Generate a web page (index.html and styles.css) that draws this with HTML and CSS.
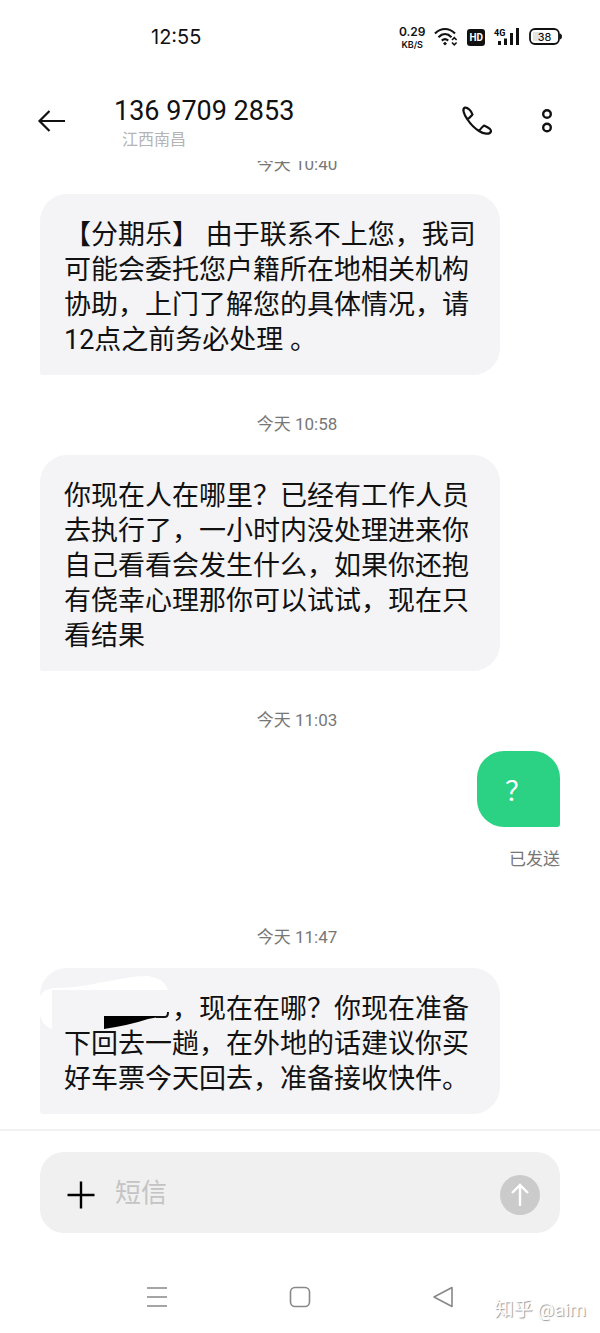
FILE: index.html
```html
<!DOCTYPE html>
<html lang="zh-CN">
<head>
<meta charset="utf-8">
<meta name="viewport" content="width=device-width, initial-scale=1">
<title>短信</title>
<link rel="stylesheet" href="styles.css">
</head>
<body>
<div class="screen">
  <div class="status">
    <span class="clock">12:55</span>
    <div class="indicators">
      <div class="speed"><b>0.29</b><span>KB/S</span></div>
      <svg class="wifi" width="24" height="20" viewBox="0 0 24 20" fill="none" stroke="#111" stroke-width="2.2">
        <path d="M1 6.5C7 .5 15 .5 21 6.5M4.500 10.200C8.500 6.200 13.500 6.200 17.500 10.200M7.800 13.600C9.800 11.800 12.200 11.800 14.200 13.600"/>
        <path d="M9 16.500L11 14.800L13 16.500L11 18.500Z" fill="#111" stroke="none"/>
        <path d="M18 13L20.300 10.700L22.600 13M18 15.500L20.300 17.800L22.600 15.500" stroke-width="1.600"/>
      </svg>
      <span class="hd">HD</span>
      <svg class="signal" width="26" height="20" viewBox="0 0 26 20">
        <text class="net" x="0" y="9">4G</text>
        <path d="M4 14h3v4H4zM10 11.500h3V18h-3zM16 6h3v12h-3zM22 1h3v17h-3z" fill="#111"/>
      </svg>
      <svg class="battery" width="34" height="18" viewBox="0 0 34 18">
        <rect x="1" y="1" width="29" height="15" rx="5" fill="#fff" stroke="#111" stroke-width="1.800"/>
        <path d="M4 4h10v9H4z" fill="#e4e4e4"/>
        <path d="M31 6c2 0 2 5 0 5z" fill="#111" stroke="#111"/>
        <text class="level" x="15.500" y="13" text-anchor="middle">38</text>
      </svg>
    </div>
  </div>

  <header class="header">
    <button class="icon-button" aria-label="返回">
      <svg width="30" height="24" viewBox="0 0 30 24" fill="none" stroke="#111" stroke-width="2.200"><path d="M28 12H3M12.500 2L2.500 12L12.500 22"/></svg>
    </button>
    <div class="contact">
      <h1 class="number">136 9709 2853</h1>
      <p class="place">江西南昌</p>
    </div>
    <button class="icon-button" aria-label="拨打电话">
      <svg width="32" height="32" viewBox="0 0 32 32" fill="none" stroke="#111" stroke-width="2.200" stroke-linejoin="round">
        <path d="M6.500 14.500C2.500 9 1 3.500 4 2.600C6.500 2 10.500 6 11.500 9.500Q9 12.500 6.500 14.500C9.500 19 13.500 23.200 18 26Q20 23 23 20.500C26.500 22 30.500 24 30 26.500C28.500 30 22.500 29 18 26"/>
      </svg>
    </button>
    <button class="icon-button more" aria-label="更多">
      <svg width="14" height="26" viewBox="0 0 14 26" fill="none" stroke="#111" stroke-width="2.400"><circle cx="7" cy="6" r="3.800"/><circle cx="7" cy="19.500" r="3.800"/></svg>
    </button>
  </header>

  <main class="thread">
    <time class="time time-cut">今天 10:40</time>
    <p class="bubble">【分期乐】 由于联系不上您，我司可能会委托您户籍所在地相关机构协助，上门了解您的具体情况，请12点之前务必处理 。</p>
    <time class="time">今天 10:58</time>
    <p class="bubble">你现在人在哪里？已经有工作人员去执行了，一小时内没处理进来你自己看看会发生什么，如果你还抱有侥幸心理那你可以试试，现在只看结果</p>
    <time class="time">今天 11:03</time>
    <p class="bubble sent">？</p>
    <span class="state">已发送</span>
    <time class="time">今天 11:47</time>
    <p class="bubble"><span class="hidden-name"></span>，现在在哪？你现在准备下回去一趟，在外地的话建议你买好车票今天回去，准备接收快件。
      <svg class="smudge" width="130" height="64" viewBox="0 0 130 64">
        <path d="M0 28Q4 21 14 20C50 20 80 8 108 8Q124 10 128 22H12V61Q2 58 0 46Z" fill="#fff"/>
        <path d="M64 48H124L108 51Q90 57 64 61Z" fill="#000"/>
        <path d="M116 49H125Q128 49 128 44" fill="none" stroke="#111" stroke-width="2"/>
      </svg>
    </p>
  </main>

  <form class="composer">
    <div class="box">
      <button class="add" type="button" aria-label="添加">
        <svg width="28" height="28" viewBox="0 0 28 28" stroke="#000" stroke-width="2.400"><path d="M14 .5v27M.5 14h27"/></svg>
      </button>
      <input class="field" type="text" placeholder="短信" aria-label="短信">
      <button class="send" type="button" aria-label="发送">
        <svg width="20" height="24" viewBox="0 0 20 24" fill="none" stroke="#fff" stroke-width="2.400"><path d="M10 23V2.500M2 10L10 2L18 10"/></svg>
      </button>
    </div>
  </form>

  <nav class="nav">
    <button class="icon-button" aria-label="最近任务"><svg width="22" height="22" viewBox="0 0 22 22" stroke="#888" stroke-width="1.600"><path d="M1 2h20M1 11h20M1 20h20"/></svg></button>
    <button class="icon-button" aria-label="主屏幕"><svg width="22" height="22" viewBox="0 0 22 22" fill="none" stroke="#888" stroke-width="1.600"><rect x="1.500" y="1.500" width="19" height="19" rx="4.500"/></svg></button>
    <button class="icon-button" aria-label="返回上一页"><svg width="22" height="22" viewBox="0 0 22 22" fill="none" stroke="#888" stroke-width="1.600" stroke-linejoin="round"><path d="M20 1.500V20.500L2 11Z"/></svg></button>
  </nav>
  <span class="watermark">知乎 @aim</span>
</div>
</body>
</html>
```
FILE: styles.css
```css
* { box-sizing: border-box; }
body {
  margin: 0;
  background: #fff;
  color: #111;
  font-family: Roboto, "Noto Sans CJK SC", sans-serif;
}
h1, p { margin: 0; font-weight: 400; }
button, input {
  border: 0;
  padding: 0;
  background: none;
  font: inherit;
}
svg { display: block; }

.screen {
  position: relative;
  display: flex;
  flex-direction: column;
  min-height: 100vh;
}

.status {
  display: flex;
  align-items: center;
  justify-content: space-between;
  height: 74px;
  padding: 0 37px 0 151px;
}
.clock { font: 20px Inter, sans-serif; }
.indicators { display: flex; align-items: center; gap: 9px; }
.speed {
  display: flex;
  flex-direction: column;
  align-items: center;
  font: 600 9px/11px Inter, sans-serif;
}
.speed b { font-size: 12px; font-weight: 600; line-height: 15px; }
.hd {
  padding: 0 2px;
  border-radius: 3px;
  background: #111;
  color: #fff;
  font: 700 10px/17px Roboto, sans-serif;
}
.net { font: 700 9px Roboto, sans-serif; }
.level { font: 11px Inter, sans-serif; }

.header {
  display: flex;
  align-items: center;
  height: 87px;
  padding: 6px 46px 0 37px;
}
.icon-button { display: flex; align-items: center; justify-content: center; }
.contact { flex: 1; padding: 6px 0 0 47px; }
.number { font-size: 27px; line-height: 32px; }
.place {
  padding-left: 8px;
  color: #b4b4b4;
  font-size: 16px;
  line-height: 26px;
}
.more { margin-left: 47px; }

.thread {
  flex: 1;
  display: flex;
  flex-direction: column;
  align-items: flex-start;
  padding: 0 40px 15px;
  overflow: hidden;
}
.time {
  align-self: center;
  margin: 37px 0 19px;
  padding-right: 6px;
  color: #777;
  font-size: 17px;
  line-height: 24px;
}
.time-cut { margin: -9px 0 18px; }
.bubble {
  position: relative;
  width: 460px;
  max-width: 100%;
  padding: 24px 20px 17px 24px;
  border-radius: 27px 27px 27px 3px;
  background: #f4f4f6;
  font-size: 27px;
  line-height: 35px;
}
.sent {
  align-self: flex-end;
  width: auto;
  padding: 24px 28px 17px;
  border-radius: 27px 27px 3px 27px;
  background: #2bd283;
  color: #fff;
}
.state {
  align-self: flex-end;
  margin: 20px 0 17px;
  color: #777;
  font-size: 17px;
  line-height: 24px;
}
.hidden-name { display: inline-block; width: 4em; }
.smudge { position: absolute; top: 0; left: 0; }

.composer {
  padding: 21px 40px 0;
  border-top: 2px solid #f1f1f1;
}
.box {
  display: flex;
  align-items: center;
  height: 81px;
  padding: 0 20px 0 27px;
  border-radius: 24px;
  background: #f0f0f0;
}
.add { margin-top: 4px; }
.field {
  flex: 1;
  min-width: 0;
  margin-left: 20px;
  font-size: 26px;
  outline: 0;
}
.field::placeholder { color: #c4c4c4; opacity: 1; }
.send {
  display: flex;
  align-items: center;
  justify-content: center;
  width: 40px;
  height: 40px;
  margin-top: 4px;
  border-radius: 50%;
  background: #cbcbcb;
}

.nav {
  display: flex;
  justify-content: space-between;
  padding: 53px 146px 25px;
}
.watermark {
  position: absolute;
  right: 14px;
  bottom: 10px;
  color: #fff;
  font-size: 19px;
  line-height: 26px;
  text-shadow: 1px 1px 1px #999;
}
```
